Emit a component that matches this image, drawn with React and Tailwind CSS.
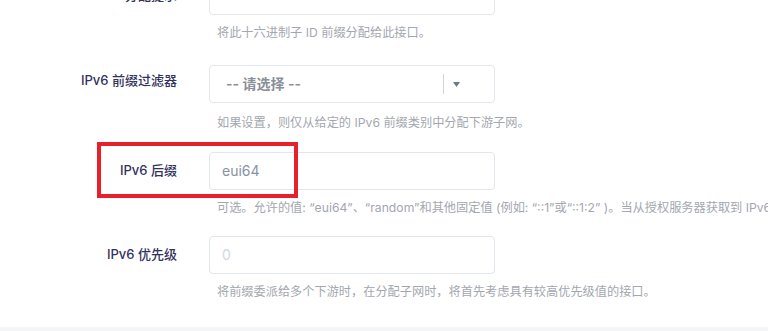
export default function App() {
  const font = { fontFamily: 'Inter, "Noto Sans CJK SC", sans-serif' }

  return (
    <div className="h-[331px] w-[768px] overflow-hidden bg-[#f4f5f7]" style={font}>
      <div className="h-[327px] overflow-hidden bg-white">
        <div className="-mt-[23px] flex flex-col">
          {/* row 1, mostly scrolled off */}
          <div className="flex items-start">
            <div className="flex h-[38px] w-[177px] shrink-0 items-center justify-end text-[13px] font-medium text-[#32325d]">
              IPv6 分配提示
            </div>
            <div className="ml-8 flex flex-col">
              <div className="h-[38px] w-[286px] rounded border border-[#e3e6ea] bg-white" />
              <p className="mt-[10px] whitespace-nowrap pl-2 text-[12.2px] leading-4 text-[#a3a7ae]">
                将此十六进制子 ID 前缀分配给此接口。
              </p>
            </div>
          </div>

          {/* row 2: select */}
          <div className="mt-[24px] flex items-start">
            <div className="flex h-[32px] w-[177px] shrink-0 items-center justify-end text-[13px] font-medium text-[#32325d]">
              IPv6 前缀过滤器
            </div>
            <div className="ml-8 flex flex-col">
              <div className="flex h-[38px] w-[286px] items-center rounded border border-[#e3e6ea] bg-white pl-4 pr-[26px]">
                <span className="flex-1 text-sm font-semibold text-[#8a8f98]">-- 请选择 --</span>
                <span className="h-[20px] w-px bg-[#d0d3d8]" />
                <span className="flex w-[24px] justify-center">
                  <svg width="7" height="5" viewBox="0 0 7 5">
                    <path d="M0 0h7L3.5 5z" fill="#6b7a90" />
                  </svg>
                </span>
              </div>
              <p className="mt-[12px] whitespace-nowrap pl-2 text-[12.2px] leading-4 text-[#a3a7ae]">
                如果设置，则仅从给定的 IPv6 前缀类别中分配下游子网。
              </p>
            </div>
          </div>

          {/* row 3: suffix */}
          <div className="relative mt-[21px] flex items-start">
            <div className="flex h-[38px] w-[177px] shrink-0 items-center justify-end text-[13px] font-medium text-[#32325d]">
              IPv6 后缀
            </div>
            <div className="ml-8 flex flex-col">
              <div className="flex h-[38px] w-[286px] items-center rounded border border-[#e3e6ea] bg-white px-3 text-sm text-[#8792a2]">
                eui64
              </div>
              <p className="mt-[10px] whitespace-nowrap pl-2 text-[12.2px] leading-4 text-[#a3a7ae]">
                可选。允许的值: “eui64”、“random”和其他固定值 (例如: “::1”或“::1:2” )。当从授权服务器获取到 IPv6 前缀（如 “ABCD::1234::/64”）时，使用后缀 (如 “::1”) 来组成 IPv6 地址。
              </p>
            </div>
            <div className="absolute left-[97px] top-[-10px] h-[56px] w-[201px] border-4 border-[#e8202b]" />
          </div>

          {/* row 4: priority */}
          <div className="mt-[20px] flex items-start">
            <div className="flex h-[38px] w-[177px] shrink-0 items-center justify-end text-[13px] font-medium text-[#32325d]">
              IPv6 优先级
            </div>
            <div className="ml-8 flex flex-col">
              <div className="flex h-[38px] w-[286px] items-center rounded border border-[#e3e6ea] bg-white px-3 text-sm text-[#d3d7de]">
                0
              </div>
              <p className="mt-[10px] whitespace-nowrap pl-2 text-[12.2px] leading-4 text-[#a3a7ae]">
                将前缀委派给多个下游时，在分配子网时，将首先考虑具有较高优先级值的接口。
              </p>
            </div>
          </div>
        </div>
      </div>
    </div>
  )
}
